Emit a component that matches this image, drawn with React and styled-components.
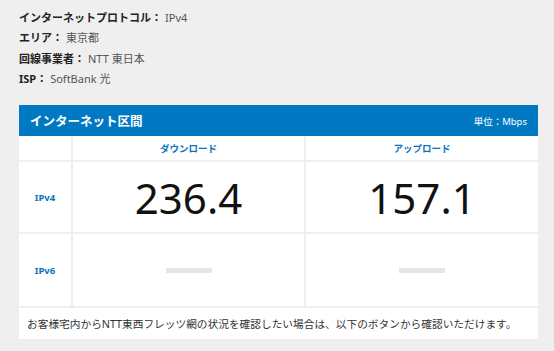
import React from "react";
import styled, { createGlobalStyle } from "styled-components";

const GlobalStyle = createGlobalStyle`
  html, body { margin: 0; padding: 0; }
  body {
    background: #efefef;
    font-family: "Noto Sans", "Noto Sans CJK JP", sans-serif;
    color: #333;
  }
`;

const Page = styled.div`
  padding: 8px 16px 0 19px;
  width: 519px;
`;

const InfoList = styled.dl`
  margin: 0 0 16px 0;
  padding: 0;
`;

const InfoRow = styled.div`
  display: flex;
  align-items: center;
  height: 20.3px;
  font-size: 11px;
  line-height: 20px;
`;

const InfoLabel = styled.dt`
  font-weight: 700;
  color: #222;
  margin: 0;
`;

const InfoValue = styled.dd`
  margin: 0 0 0 3px;
  color: #555;
`;

const Panel = styled.section`
  background: #efefef;
  display: flex;
  flex-direction: column;
  gap: 2px;
`;

const PanelHeader = styled.header`
  background: #0079c2;
  height: 31px;
  display: flex;
  align-items: center;
  justify-content: space-between;
  padding: 0 11px 0 11px;
  color: #fff;
`;

const PanelTitle = styled.h2`
  margin: 0;
  font-size: 12.5px;
  font-weight: 700;
`;

const Unit = styled.span`
  font-size: 9.5px;
`;

const Grid = styled.div`
  display: grid;
  grid-template-columns: 52px 231px 232px;
  grid-template-rows: 24px 70px 72px;
  gap: 2px;
  margin-top: -2px;
`;

const Cell = styled.div`
  background: #fff;
  display: flex;
  align-items: center;
  justify-content: center;
`;

const ColHead = styled(Cell)`
  color: #0a72b8;
  font-size: 9.5px;
  font-weight: 700;
`;

const RowHead = styled(Cell)`
  color: #0a72b8;
  font-size: 9.5px;
  font-weight: 700;
`;

const Value = styled(Cell)`
  font-size: 42px;
  color: #111;
  font-weight: 400;
`;

const Dash = styled.span`
  display: block;
  width: 46px;
  height: 5px;
  background: #e6e6e6;
`;

const Footer = styled.p`
  margin: 0;
  background: #fff;
  height: 31px;
  display: flex;
  align-items: center;
  padding: 0 8px;
  font-size: 10.7px;
  color: #333;
`;

const info = [
  ["インターネットプロトコル：", "IPv4"],
  ["エリア：", "東京都"],
  ["回線事業者：", "NTT 東日本"],
  ["ISP：", "SoftBank 光"],
];

const rows = [
  { label: "IPv4", down: "236.4", up: "157.1" },
  { label: "IPv6", down: null, up: null },
];

export default function App() {
  return (
    <>
      <GlobalStyle />
      <Page>
        <InfoList>
          {info.map(([k, v]) => (
            <InfoRow key={k}>
              <InfoLabel>{k}</InfoLabel>
              <InfoValue>{v}</InfoValue>
            </InfoRow>
          ))}
        </InfoList>
        <Panel>
          <PanelHeader>
            <PanelTitle>インターネット区間</PanelTitle>
            <Unit>単位：Mbps</Unit>
          </PanelHeader>
          <Grid>
            <Cell />
            <ColHead>ダウンロード</ColHead>
            <ColHead>アップロード</ColHead>
            {rows.map((r) => (
              <React.Fragment key={r.label}>
                <RowHead>{r.label}</RowHead>
                <Value>{r.down ?? <Dash />}</Value>
                <Value>{r.up ?? <Dash />}</Value>
              </React.Fragment>
            ))}
          </Grid>
          <Footer>
            お客様宅内からNTT東西フレッツ網の状況を確認したい場合は、以下のボタンから確認いただけます。
          </Footer>
        </Panel>
      </Page>
    </>
  );
}
